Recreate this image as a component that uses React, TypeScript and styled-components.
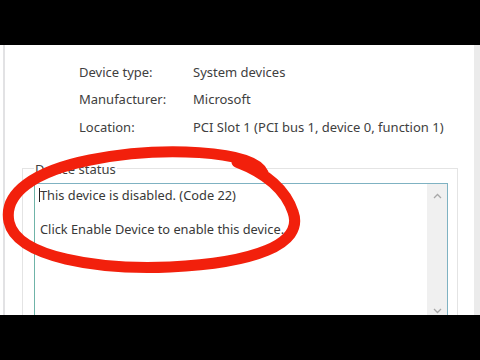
import React from "react";
import styled, { createGlobalStyle } from "styled-components";

const Global = createGlobalStyle`
  html, body { margin: 0; padding: 0; background: #000; }
  * { box-sizing: border-box; }
`;

const Page = styled.div`
  position: relative;
  width: 480px;
  height: 360px;
  background: #000;
  display: flex;
  flex-direction: column;
  overflow: hidden;
  font-family: "Noto Sans", "Open Sans", sans-serif;
`;

const Bar = styled.div`
  height: 45px;
  flex: none;
  background: #000;
`;

const Screen = styled.div`
  height: 270px;
  flex: none;
  display: flex;
  background: #fff;
  overflow: hidden;
  padding-left: 3px;
`;

const Window = styled.div`
  flex: 1;
  border-left: 2px solid #e2e2e4;
  display: flex;
  flex-direction: column;
  padding: 13px 0 0 17px;
`;

const RightEdge = styled.div`
  width: 6px;
  flex: none;
  background: #ebebeb;
`;

const Props = styled.div`
  display: grid;
  grid-template-columns: 114px auto;
  grid-auto-rows: 27.5px;
  align-items: center;
  padding-left: 57px;
  font-size: 13px;
  color: #404040;
`;

const Cell = styled.div`
  white-space: nowrap;
`;

const Group = styled.fieldset`
  margin: 20px 0 0 0;
  width: 436px;
  border: 1px solid #e4e4e4;
  padding: 6px 0 0 11px;
  min-width: 0;
`;

const Legend = styled.legend`
  padding: 0 1px;
  margin: 0;
  font-size: 13px;
  line-height: 16px;
  color: #404040;
`;

const TextBox = styled.div`
  position: relative;
  width: 414px;
  height: 136px;
  border: 1px solid #7fb2c2;
  border-left-color: #6fb4a8;
  background: #fff;
  padding: 3px 24px 0 5px;
  font-size: 12.8px;
  line-height: 17px;
  color: #383838;
`;

const Line = styled.div`
  white-space: nowrap;
  height: 17px;
`;

const Caret = styled.span`
  display: inline-block;
  width: 1px;
  height: 14px;
  background: #222;
  vertical-align: -2px;
  margin-left: -1px;
`;

const ScrollTrack = styled.div`
  position: absolute;
  top: 0;
  right: 0;
  bottom: 0;
  width: 20px;
  background: #f0f0f0;
  display: flex;
  flex-direction: column;
  justify-content: space-between;
  align-items: center;
  padding: 9px 0 4px;
`;

const Chevron = ({ down }: { down?: boolean }) => (
  <svg width="9" height="6" viewBox="0 0 9 6">
    <path
      d={down ? "M1 1 L4.5 4.5 L8 1" : "M1 5 L4.5 1.5 L8 5"}
      fill="none"
      stroke="#a8a8a8"
      strokeWidth="1.3"
    />
  </svg>
);

const Scribble = styled.svg`
  position: absolute;
  left: 0;
  top: 0;
  pointer-events: none;
`;

const rows: [string, string][] = [
  ["Device type:", "System devices"],
  ["Manufacturer:", "Microsoft"],
  ["Location:", "PCI Slot 1 (PCI bus 1, device 0, function 1)"],
];

export default function App() {
  return (
    <>
      <Global />
      <Page>
        <Bar />
        <Screen>
          <Window>
            <Props>
              {rows.map(([k, v]) => (
                <React.Fragment key={k}>
                  <Cell>{k}</Cell>
                  <Cell>{v}</Cell>
                </React.Fragment>
              ))}
            </Props>
            <Group>
              <Legend>Device status</Legend>
              <TextBox>
                <Line>
                  <Caret />
                  This device is disabled. (Code 22)
                </Line>
                <Line />
                <Line>Click Enable Device to enable this device.</Line>
                <ScrollTrack>
                  <Chevron />
                  <Chevron down />
                </ScrollTrack>
              </TextBox>
            </Group>
          </Window>
          <RightEdge />
        </Screen>
        <Bar />
        <Scribble width="480" height="360" viewBox="0 0 480 360">
          <path
            d="M263 173 C 254 150, 160 146, 90 160 C 35 171, 3 193, 9 222 C 17 258, 100 270, 170 267 C 252 263, 305 245, 293 212 C 285 188, 263 172, 237 162"
            fill="none"
            stroke="#f2200c"
            strokeWidth="11"
            strokeLinecap="round"
          />
        </Scribble>
      </Page>
    </>
  );
}
